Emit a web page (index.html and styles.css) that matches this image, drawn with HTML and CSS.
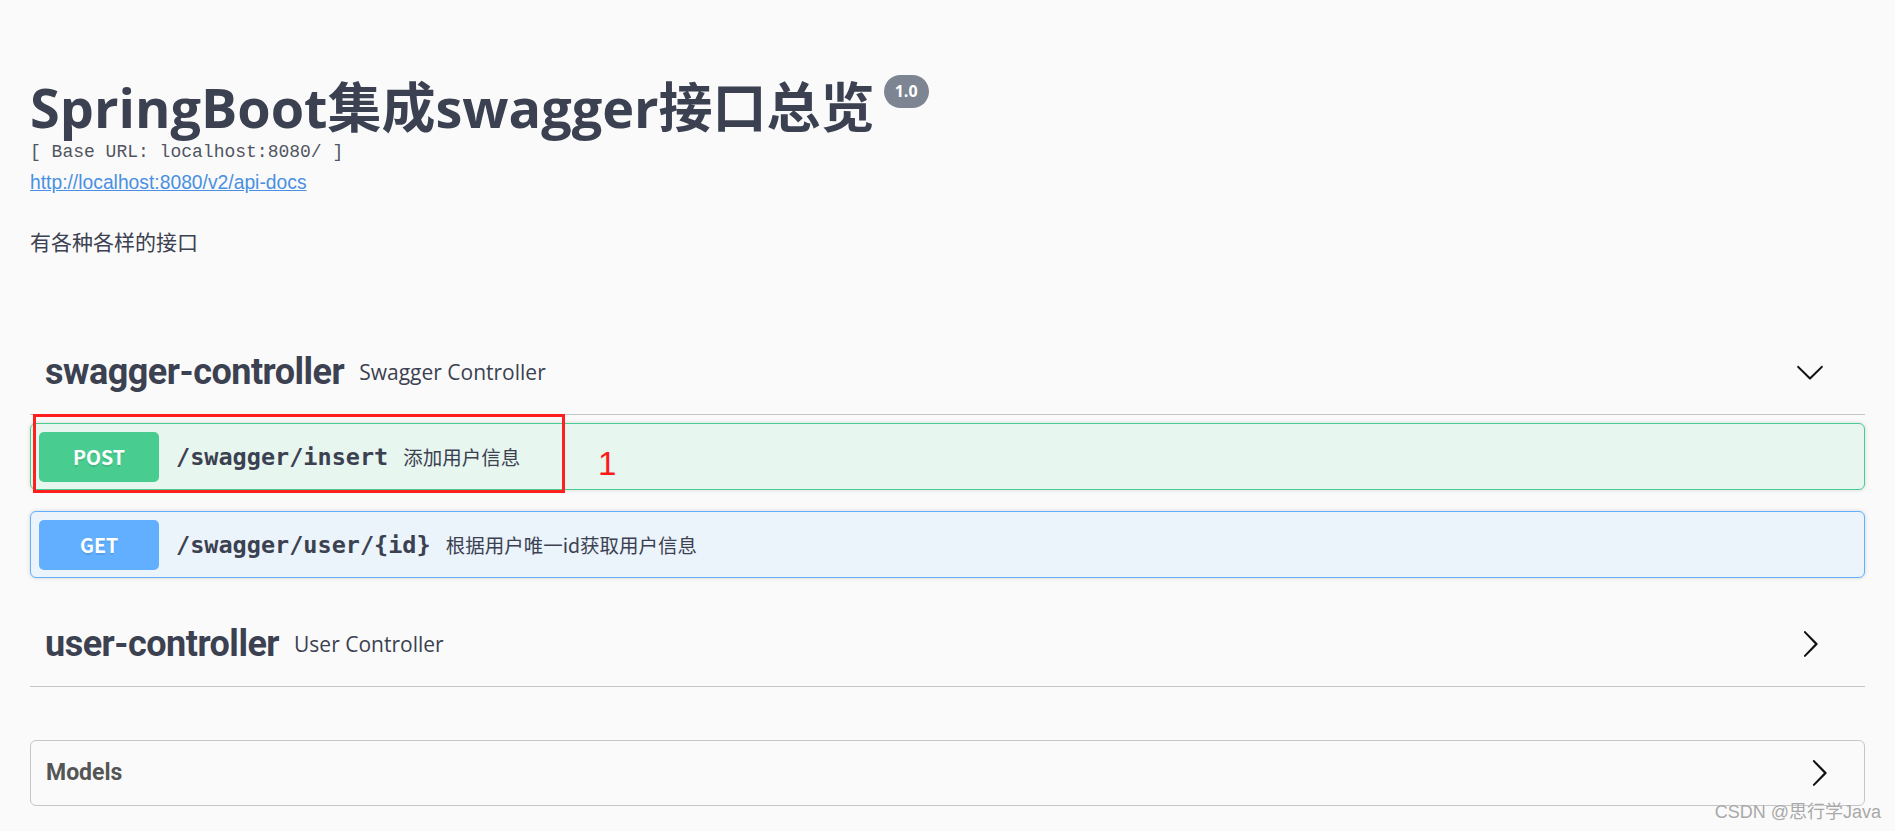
FILE: index.html
```html
<!DOCTYPE html>
<html lang="zh-CN">
<head>
<meta charset="utf-8">
<title>Swagger UI</title>
<link rel="stylesheet" href="styles.css">
</head>
<body>
<div class="wrapper">
  <section class="info">
    <div class="title-row">
      <h2 class="title">SpringBoot集成swagger接口总览</h2>
      <span class="version">1.0</span>
    </div>
    <div class="base-url">[ Base URL: localhost:8080/ ]</div>
    <div class="link-row"><a class="spec-link" href="#">http://localhost:8080/v2/api-docs</a></div>
    <p class="desc">有各种各样的接口</p>
  </section>

  <section class="tag-section">
    <h3 class="tag">
      <span class="tag-name">swagger-controller</span>
      <small class="tag-desc">Swagger Controller</small>
      <span class="tag-arrow">
        <svg width="30" height="30" viewBox="0 0 20 20"><path d="M17.418 6.109c.272-.268.709-.268.979 0s.271.701 0 .969l-7.908 7.83c-.27.268-.707.268-.979 0l-7.908-7.83c-.27-.268-.27-.701 0-.969.271-.268.709-.268.979 0L10 13.25l7.418-7.141z"/></svg>
      </span>
    </h3>
    <div class="opblock post">
      <div class="summary">
        <span class="method">POST</span>
        <span class="path">/swagger/insert</span>
        <span class="op-desc">添加用户信息</span>
      </div>
      <div class="mark-box"></div>
      <div class="mark-num">1</div>
    </div>
    <div class="opblock get">
      <div class="summary">
        <span class="method">GET</span>
        <span class="path">/swagger/user/{id}</span>
        <span class="op-desc">根据用户唯一id获取用户信息</span>
      </div>
    </div>
  </section>

  <section class="tag-section">
    <h3 class="tag">
      <span class="tag-name">user-controller</span>
      <small class="tag-desc">User Controller</small>
      <span class="tag-arrow">
        <svg width="30" height="30" viewBox="0 0 20 20"><path d="M13.25 10L6.109 2.58c-.268-.27-.268-.707 0-.979.268-.27.701-.27.969 0l7.83 7.908c.268.271.268.709 0 .979l-7.83 7.908c-.268.271-.701.27-.969 0-.268-.269-.268-.707 0-.979L13.25 10z"/></svg>
      </span>
    </h3>
  </section>

  <section class="models">
    <h4 class="models-head">
      <span>Models</span>
      <svg width="30" height="30" viewBox="0 0 20 20"><path d="M13.25 10L6.109 2.58c-.268-.27-.268-.707 0-.979.268-.27.701-.27.969 0l7.830 7.908c.268.271.268.709 0 .979l-7.83 7.908c-.268.271-.701.27-.969 0-.268-.269-.268-.707 0-.979L13.25 10z"/></svg>
    </h4>
  </section>
</div>
<div class="watermark">CSDN @思行学Java</div>
</body>
</html>
```
FILE: styles.css
```css
html, body {
  margin: 0;
  padding: 0;
}
body {
  background: #fafafa;
  color: #3b4151;
  font-family: "Open Sans", "Noto Sans CJK SC", sans-serif;
  overflow: hidden;
  height: 831px;
  position: relative;
}
.wrapper {
  padding: 0 30px;
}
.info {
  padding-top: 77px;
}
.title-row {
  display: flex;
  align-items: flex-start;
}
.title {
  margin: 0;
  font-family: "Open Sans", "Noto Sans CJK SC", sans-serif;
  font-weight: 700;
  font-size: 54px;
  line-height: 60px;
  height: 60px;
  color: #3b4151;
  white-space: nowrap;
}
.version {
  margin: -2px 0 0 9px;
  height: 33px;
  width: 45px;
  border-radius: 17px;
  background: #7d8492;
  color: #fff;
  font-family: "Open Sans", sans-serif;
  font-weight: 700;
  font-size: 16px;
  line-height: 33px;
  text-align: center;
}
.base-url {
  margin-top: 3px;
  font-family: "Liberation Mono", monospace;
  font-size: 18px;
  line-height: 24px;
  color: #50555f;
}
.link-row {
  margin-top: 6px;
  line-height: 26px;
  height: 26px;
}
.spec-link {
  font-family: "Liberation Sans", sans-serif;
  font-size: 19.3px;
  color: #4990e2;
  text-decoration: underline;
}
.desc {
  margin: 30px 0 0;
  font-family: "Noto Sans CJK SC", sans-serif;
  font-size: 21px;
  line-height: 30px;
  color: #3b4151;
}
.tag-section {
  margin-top: 74px;
}
.tag-section + .tag-section {
  margin-top: 0;
}
.tag {
  margin: 0 0 8px;
  display: flex;
  align-items: center;
  padding: 15px 30px 15px 15px;
  height: 54px;
  border-bottom: 1px solid #c4c6cb;
}
.tag-name {
  font-family: Roboto, sans-serif;
  font-weight: 700;
  font-size: 36px;
  letter-spacing: -0.5px;
  line-height: 54px;
  color: #3b4151;
}
.tag-desc {
  flex: 1;
  padding: 0 15px;
  font-family: "Open Sans", sans-serif;
  font-weight: 400;
  font-size: 21px;
  color: #3b4151;
}
.tag-arrow {
  display: flex;
  margin-right: 10px;
}
.tag-arrow svg,
.models-head svg {
  fill: #111;
}
.opblock {
  position: relative;
  margin-bottom: 21px;
  border: 1px solid;
  border-radius: 6px;
  box-shadow: 0 0 4px rgba(0, 0, 0, .15);
}
.opblock.post {
  background: #e7f6ef;
  border-color: #49cc90;
}
.opblock.get {
  background: #ebf3fb;
  border-color: #61affe;
  margin-bottom: 24px;
}
.summary {
  display: flex;
  align-items: center;
  padding: 7px 8px;
  height: 51px;
}
.method {
  width: 120px;
  height: 50px;
  border-radius: 5px;
  display: flex;
  align-items: center;
  justify-content: center;
  color: #fff;
  font-family: "Noto Sans CJK SC", sans-serif;
  font-weight: 700;
  font-size: 19.5px;
  text-shadow: 0 1.5px 0 rgba(0, 0, 0, .1);
}
.post .method {
  background: #49cc90;
}
.get .method {
  background: #61affe;
}
.path {
  padding: 0 15px 0 17px;
  font-family: "DejaVu Sans Mono", monospace;
  font-weight: 600;
  font-size: 23.5px;
  color: #3b4151;
}
.op-desc {
  font-family: "Noto Sans CJK SC", sans-serif;
  font-size: 19.5px;
  color: #3b4151;
}
.mark-box {
  position: absolute;
  left: 2px;
  top: -10px;
  width: 526px;
  height: 73px;
  border: 3px solid #ff1f1f;
}
.mark-num {
  position: absolute;
  left: 567px;
  top: 20px;
  font-family: "Liberation Sans", sans-serif;
  font-size: 33px;
  line-height: 40px;
  color: #ff1a1a;
}
.models {
  margin-top: 53px;
  border: 1px solid #c4c6cb;
  border-radius: 6px;
}
.models-head {
  margin: 0;
  display: flex;
  align-items: center;
  justify-content: space-between;
  padding: 15px 30px 15px 15px;
  height: 34px;
  font-family: Roboto, sans-serif;
  font-weight: 700;
  font-size: 23px;
  line-height: 34px;
  color: #555;
}
.watermark {
  position: absolute;
  right: 14px;
  bottom: 8px;
  font-family: "Liberation Sans", "Noto Sans CJK SC", sans-serif;
  font-size: 18px;
  color: #a8a8a8;
  text-shadow: 0 0 1px #fff;
}
```
